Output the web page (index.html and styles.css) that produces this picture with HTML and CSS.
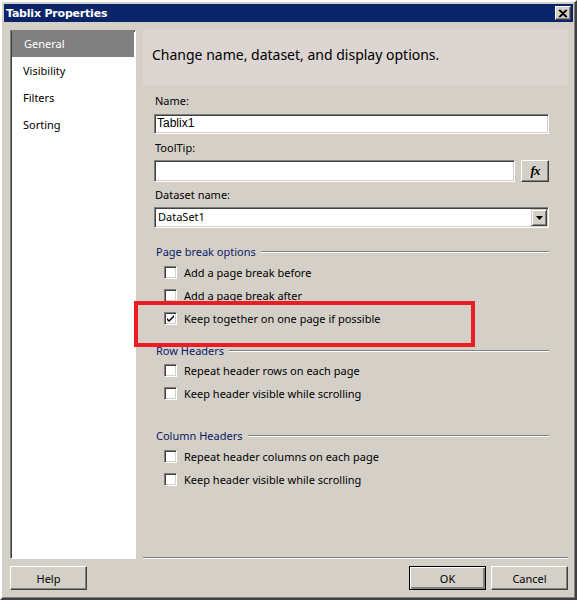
FILE: index.html
```html
<!DOCTYPE html>
<html>
<head>
<meta charset="utf-8">
<link rel="stylesheet" href="styles.css">
</head>
<body>
<div class="window">
  <div class="titlebar">
    <span class="title">Tablix Properties</span>
    <span class="close"><svg width="10" height="9" viewBox="0 0 10 9"><path d="M1 1 L8 8 M8 1 L1 8 M2 1 L9 8 M9 1 L2 8" stroke="#000" stroke-width="1.2" fill="none"/></svg></span>
  </div>
  <div class="body">
    <div class="nav">
      <div class="nav-item selected">General</div>
      <div class="nav-item">Visibility</div>
      <div class="nav-item">Filters</div>
      <div class="nav-item">Sorting</div>
    </div>
    <div class="main">
      <div class="header">Change name, dataset, and display options.</div>
      <div class="form">
        <div class="label l-name">Name:</div>
        <div class="input i-name">Tablix1</div>
        <div class="label l-tip">ToolTip:</div>
        <div class="tip-row">
          <div class="input i-tip"></div>
          <div class="fx">fx</div>
        </div>
        <div class="label l-ds">Dataset name:</div>
        <div class="input i-ds">DataSet1<span class="drop"><svg width="7" height="4" viewBox="0 0 7 4"><path d="M0 0 H7 L3.5 4 Z" fill="#000"/></svg></span></div>

        <div class="group g-page"><span>Page break options</span><i class="rule"></i></div>
        <div class="check c1"><span class="box"></span>Add a page break before</div>
        <div class="check c2"><span class="box"></span>Add a page break after</div>
        <div class="check c2"><span class="box checked"><svg width="9" height="9" viewBox="0 0 9 9"><path d="M1 4 L3 6 L8 1 L8 3 L3 8 L1 6 Z" fill="#000"/></svg></span>Keep together on one page if possible</div>

        <div class="group g-row"><span>Row Headers</span><i class="rule"></i></div>
        <div class="check c1b"><span class="box"></span>Repeat header rows on each page</div>
        <div class="check c2"><span class="box"></span>Keep header visible while scrolling</div>

        <div class="group g-col"><span>Column Headers</span><i class="rule"></i></div>
        <div class="check c1"><span class="box"></span>Repeat header columns on each page</div>
        <div class="check c2"><span class="box"></span>Keep header visible while scrolling</div>
      </div>
      <div class="sep"></div>
    </div>
  </div>
  <div class="buttons">
    <div class="btn">Help</div>
    <div class="spacer"></div>
    <div class="btn default">OK</div>
    <div class="btn">Cancel</div>
  </div>
  <div class="highlight"></div>
</div>
</body>
</html>
```
FILE: styles.css
```css
* { box-sizing: border-box; }
html, body { margin: 0; padding: 0; }
body { background: #d4d0c8; font-family: "Noto Sans", "DejaVu Sans", sans-serif; font-size: 11px; color: #000; }
.window {
  position: relative;
  width: 577px; height: 600px;
  background: #d4d0c8;
  border-style: solid; border-width: 2px;
  border-color: #ffffff #404040 #404040 #ffffff;
  box-shadow: inset -1px -1px 0 #808080;
  padding: 2px;
  display: flex; flex-direction: column;
}
.titlebar {
  height: 18px; background: #0a246a; color: #fff;
  display: flex; align-items: center; justify-content: space-between;
  padding: 0 2px 0 2px;
}
.title { font-family: "DejaVu Sans", sans-serif; font-weight: bold; font-size: 11px; letter-spacing: -0.2px; }
.close {
  width: 16px; height: 14px; background: #d4d0c8;
  border-style: solid; border-width: 1px; border-color: #fff #404040 #404040 #fff;
  box-shadow: inset -1px -1px 0 #808080;
  display: flex; align-items: center; justify-content: center;
}
.body { display: flex; margin-top: 8px; padding: 0 2px 0 6px; gap: 7px; height: 529px; }
.nav {
  width: 126px; height: 529px; background: #fff;
  border-style: solid; border-width: 1px; border-color: #808080 #fff #fff #808080;
  box-shadow: inset 1px 1px 0 #404040;
}
.nav-item { height: 27px; line-height: 27px; padding-left: 12px; }
.nav-item.selected { background: #808080; color: #fff; height: 26px; line-height: 26px; margin: 0 1px 0 1px; }
.main { width: 425px; display: flex; flex-direction: column; }
.header {
  height: 56px; background: #dcd5d1; font-size: 14px; line-height: 50px; padding-left: 9px; color: #000;
}
.form { flex: 1; padding: 0 19px 0 11px; display: flex; flex-direction: column; }
.label { line-height: 13px; height: 13px; padding-left: 1px; }
.l-name { margin-top: 8px; }
.l-tip { margin-top: 7px; }
.l-ds { margin-top: 6px; }
.input {
  background: #fff; height: 20px; line-height: 16px; padding-left: 2px;
  border-style: solid; border-width: 1px; border-color: #808080 #fff #fff #808080;
  box-shadow: inset 1px 1px 0 #404040, inset -1px -1px 0 #d4d0c8;
  font-family: "Liberation Sans", sans-serif; font-size: 12px;
}
.i-name { margin-top: 7px; }
.tip-row { display: flex; gap: 6px; margin-top: 6px; height: 22px; }
.i-tip { width: 361px; height: 22px; }
.fx {
  width: 28px; height: 22px; background: #d4d0c8;
  border-style: solid; border-width: 1px; border-color: #fff #404040 #404040 #fff;
  box-shadow: inset -1px -1px 0 #808080;
  font-family: "Liberation Serif", serif; font-style: italic; font-weight: bold; font-size: 13px;
  display: flex; align-items: center; justify-content: center; letter-spacing: -1px;
}
.i-ds { margin-top: 6px; height: 21px; line-height: 17px; position: relative; font-family: "Noto Sans", sans-serif; font-size: 11px; padding-left: 3px; }
.drop {
  position: absolute; right: 1px; top: 1px; width: 16px; height: 17px; background: #d4d0c8;
  border-style: solid; border-width: 1px; border-color: #d4d0c8 #404040 #404040 #d4d0c8;
  box-shadow: inset 1px 1px 0 #fff, inset -1px -1px 0 #808080;
  display: flex; align-items: center; justify-content: center;
}
.group { display: flex; align-items: center; height: 13px; line-height: 13px; color: #0a1a66; padding-left: 2px; }
.group span { white-space: nowrap; }
.rule { flex: 1; margin-left: 5px; height: 2px; border-top: 1px solid #808080; border-bottom: 1px solid #fff; }
.g-page { margin-top: 17px; }
.g-row { margin-top: 18px; }
.g-col { margin-top: 28px; }
.check { display: flex; align-items: center; height: 16px; padding-left: 10px; gap: 7px; white-space: nowrap; }
.c1 { margin-top: 6px; }
.c1b { margin-top: 5px; }
.c2 { margin-top: 7px; }
.box {
  width: 13px; height: 13px; background: #fff; flex: none;
  border-style: solid; border-width: 1px; border-color: #808080 #fff #fff #808080;
  box-shadow: inset 1px 1px 0 #404040, inset -1px -1px 0 #d4d0c8;
  display: flex; align-items: center; justify-content: center;
}
.sep { height: 2px; border-top: 1px solid #808080; border-bottom: 1px solid #fff; }
.buttons { display: flex; gap: 5px; padding: 0 5px 0 6px; margin-top: 7px; }
.spacer { flex: 1; }
.btn {
  width: 77px; height: 24px; background: #d4d0c8;
  border-style: solid; border-width: 1px; border-color: #fff #404040 #404040 #fff;
  box-shadow: inset -1px -1px 0 #808080;
  display: flex; align-items: center; justify-content: center;
}
.btn.default { border: 1px solid #000; box-shadow: inset 1px 1px 0 #fff, inset -2px -2px 0 #808080, inset -1px -1px 0 #404040; }
.highlight { position: absolute; left: 132px; top: 299px; width: 341px; height: 46px; border: 4px solid #ed1c24; }
```
